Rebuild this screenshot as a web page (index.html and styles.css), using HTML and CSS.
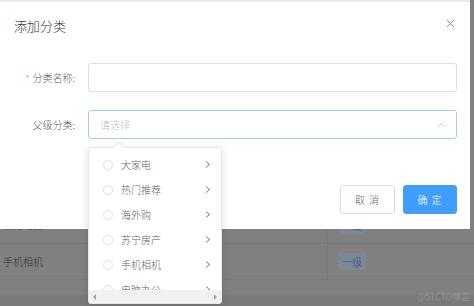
FILE: index.html
```html
<!DOCTYPE html>
<html lang="zh">
<head>
<meta charset="utf-8">
<link rel="stylesheet" href="styles.css">
</head>
<body>
<div class="page">
  <div class="topstrip"></div>
  <div class="dialog">
    <div class="dlg-header">
      <span class="title">添加分类</span>
      <svg class="close" viewBox="0 0 10 10" width="9" height="9"><path d="M1 1L9 9M9 1L1 9" stroke="#909399" stroke-width="1.1" fill="none"/></svg>
    </div>
    <div class="dlg-body">
      <div class="form-item">
        <label class="label"><span class="req">*</span>分类名称:</label>
        <div class="input"></div>
      </div>
      <div class="form-item">
        <label class="label">父级分类:</label>
        <div class="input select">
          <span class="ph">请选择</span>
          <svg class="arrow" viewBox="0 0 10 6" width="9" height="6"><path d="M1 5L5 1.3L9 5" stroke="#c0c4cc" stroke-width="1.1" fill="none"/></svg>
        </div>
      </div>
    </div>
    <div class="dlg-footer">
      <button class="btn">取 消</button>
      <button class="btn primary">确 定</button>
    </div>
  </div>
  <div class="table">
    <div class="row partial">
      <div class="cell name"><span class="shift">家用电器</span></div>
      <div class="cell lvl"><span class="shift"><span class="tag">一级</span></span></div>
    </div>
    <div class="row">
      <div class="cell name">手机相机</div>
      <div class="cell lvl"><span class="tag">一级</span></div>
    </div>
    <div class="tfoot"></div>
    <div class="band"></div>
  </div>

  <div class="cascader">
    <div class="pop-arrow"></div>
    <div class="menu">
      <div class="item"><span class="radio"></span><span class="txt">大家电</span><span class="chev"></span></div>
      <div class="item"><span class="radio"></span><span class="txt">热门推荐</span><span class="chev"></span></div>
      <div class="item"><span class="radio"></span><span class="txt">海外购</span><span class="chev"></span></div>
      <div class="item"><span class="radio"></span><span class="txt">苏宁房产</span><span class="chev"></span></div>
      <div class="item"><span class="radio"></span><span class="txt">手机相机</span><span class="chev"></span></div>
      <div class="item"><span class="radio"></span><span class="txt">电脑办公</span><span class="chev"></span></div>
    </div>
    <div class="hscroll">
      <span class="sarrow left"></span>
      <span class="sarrow right"></span>
    </div>
  </div>
  <div class="watermark">@51CTO博客</div>
</div>
</body>
</html>
```
FILE: styles.css
```css
* { box-sizing: border-box; }
html, body { margin: 0; padding: 0; }
body {
  width: 474px;
  height: 306px;
  overflow: hidden;
  background: #808080;
  font-family: "Noto Sans CJK SC", "Noto Sans", sans-serif;
  font-weight: 300;
}
.page {
  position: relative;
  width: 474px;
  height: 306px;
}
.topstrip {
  height: 2px;
  width: 470px;
  background: #e9e9e9;
}
.dialog {
  width: 470px;
  height: 227px;
  background: #fff;
  display: flex;
  flex-direction: column;
}
.dlg-header {
  display: flex;
  justify-content: space-between;
  align-items: flex-start;
  padding: 15px 15px 0 14px;
  height: 33px;
}
.title {
  font-size: 13px;
  line-height: 18px;
  color: #3a3b3e;
}
.close { margin-top: 2px; }
.dlg-body {
  padding: 28px 13px 0 0;
  display: flex;
  flex-direction: column;
  gap: 18px;
}
.form-item {
  display: flex;
  align-items: center;
  height: 29px;
}
.label {
  width: 88px;
  flex: none;
  text-align: right;
  padding-right: 13px;
  font-size: 10px;
  color: #606266;
  line-height: 29px;
}
.req {
  color: #f56c6c;
  margin-right: 3px;
  font-size: 9px;
}
.input {
  flex: 1;
  height: 29px;
  border: 1px solid #dcdfe6;
  border-radius: 3px;
  background: #fff;
}
.select {
  border-color: #9fcbfb;
  display: flex;
  align-items: center;
  justify-content: space-between;
  padding: 0 10px 0 11px;
}
.ph {
  font-size: 10px;
  color: #c0c4cc;
}
.dlg-footer {
  margin-top: 46px;
  display: flex;
  justify-content: flex-end;
  gap: 8px;
  padding-right: 13px;
}
.btn {
  width: 55px;
  height: 29px;
  border: 1px solid #dcdfe6;
  border-radius: 3px;
  background: #fff;
  color: #606266;
  font-family: inherit;
  font-weight: 300;
  font-size: 10px;
  letter-spacing: 1px;
  padding: 0;
  white-space: pre;
}
.btn.primary {
  width: 54px;
  background: #409eff;
  border-color: #409eff;
  color: #fff;
}

/* underlying table behind the mask */
.table {
  width: 474px;
}
.row {
  display: flex;
  height: 36px;
  border-bottom: 1px solid #777a7d;
}
.row.partial {
  height: 15px;
  overflow: hidden;
}
.cell {
  display: flex;
  align-items: center;
  font-size: 10px;
  color: #343434;
}
.cell.name {
  width: 328px;
  padding-left: 3px;
  border-right: 1px solid #777a7d;
}
.cell.lvl {
  padding-left: 10px;
}
.partial .cell { align-items: flex-start; }
.partial .shift { margin-top: -12px; display: flex; }
.tag {
  display: inline-block;
  background: #7d8894;
  color: #24568f;
  font-size: 10px;
  line-height: 17px;
  height: 17px;
  padding: 0 4px;
  border-radius: 2px;
}
.tfoot {
  height: 15px;
}
.band {
  height: 11px;
  background: #7a7a7a;
}

/* cascader popper (floating over the page) */
.cascader {
  position: absolute;
  left: 88px;
  top: 147px;
  width: 134px;
  height: 157px;
  background: #fff;
  border: 1px solid #e4e7ed;
  border-radius: 3px;
  box-shadow: 0 2px 8px rgba(0,0,0,0.12);
  display: flex;
  flex-direction: column;
}
.pop-arrow {
  position: absolute;
  left: 26px;
  top: -5px;
  width: 8px;
  height: 8px;
  background: #fff;
  border-left: 1px solid #e4e7ed;
  border-top: 1px solid #e4e7ed;
  transform: rotate(45deg);
}
.menu {
  flex: 1;
  overflow: hidden;
  padding-top: 4px;
}
.item {
  display: flex;
  align-items: center;
  height: 25px;
  padding: 0 10px 0 14px;
}
.radio {
  width: 10px;
  height: 10px;
  border: 1px solid #dcdfe6;
  border-radius: 50%;
  flex: none;
}
.txt {
  margin-left: 8px;
  font-size: 10px;
  color: #606266;
  flex: 1;
}
.chev {
  width: 5px;
  height: 5px;
  border-top: 1px solid #909399;
  border-right: 1px solid #909399;
  transform: rotate(45deg);
  margin-right: 2px;
}
.hscroll {
  height: 13px;
  background: #f1f1f1;
  display: flex;
  justify-content: space-between;
  align-items: center;
  padding: 0 4px;
}
.sarrow {
  width: 0;
  height: 0;
  border-top: 3px solid transparent;
  border-bottom: 3px solid transparent;
}
.sarrow.left { border-right: 3px solid #a3a3a3; }
.sarrow.right { border-left: 3px solid #a3a3a3; }

.watermark {
  position: absolute;
  right: 4px;
  bottom: 3px;
  font-size: 9px;
  color: #9a9a9a;
}
```
